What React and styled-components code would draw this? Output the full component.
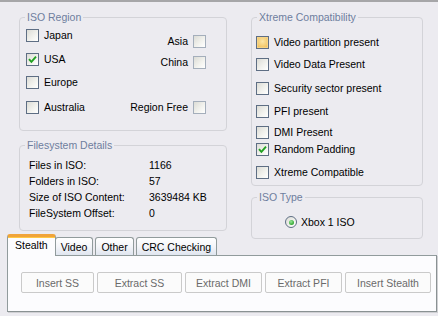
import React from "react";
import styled, { createGlobalStyle } from "styled-components";

const GlobalStyle = createGlobalStyle`
  body {
    margin: 0;
    background: #ecebf0;
    font-family: "Liberation Sans", Arial, sans-serif;
    font-size: 10.5px;
    color: #000;
  }
`;

const Window = styled.div`
  width: 438px;
  height: 316px;
  box-sizing: border-box;
  border-top: 2px solid #a6a6a8;
  overflow: hidden;
`;

const Main = styled.div`
  display: flex;
  align-items: flex-start;
  gap: 24px;
  height: 232px;
  box-sizing: border-box;
  padding: 9px 0 0 19px;
`;

const Column = styled.div`
  display: flex;
  flex-direction: column;
  width: ${(p) => p.$w}px;
`;

const Group = styled.fieldset`
  flex: none;
  box-sizing: border-box;
  margin: ${(p) => p.$mt || 0}px 0 0 0;
  padding: 0 ${(p) => p.$pr || 6}px 0 ${(p) => p.$pl || 6}px;
  height: ${(p) => p.$h}px;
  border: 1px solid #d3d3d8;
  border-radius: 4px;
  min-width: 0;
`;

const Title = styled.legend`
  padding: 0 2px;
  margin-left: ${(p) => p.$ml || 0}px;
  line-height: 13px;
  color: #6e7e9e;
`;

const Split = styled.div`
  display: flex;
  justify-content: space-between;
`;

const Stack = styled.div`
  display: flex;
  flex-direction: column;
  align-items: ${(p) => (p.$right ? "flex-end" : "flex-start")};
`;

const Row = styled.div`
  display: flex;
  align-items: center;
  gap: ${(p) => p.$gap || 5}px;
  height: 16px;
  margin-top: ${(p) => p.$mt || 0}px;
  padding-left: ${(p) => p.$pl || 0}px;
  white-space: nowrap;
`;

const Box = styled.span`
  position: relative;
  box-sizing: border-box;
  width: 13px;
  height: 13px;
  flex: none;
  border: 1px solid ${(p) => (p.$dim ? "#a4aebb" : "#5e6e84")};
  background: ${(p) =>
    p.$hover
      ? "radial-gradient(circle at 50% 40%, #fbe6a8 0%, #f3c768 70%, #e9b54c 100%)"
      : "linear-gradient(135deg, #dcdcd6 0%, #f3f3ef 60%, #ffffff 100%)"};
  box-shadow: ${(p) => (p.$hover ? "inset 0 0 0 1px #f7d487" : "none")};

  svg {
    position: absolute;
    left: 1px;
    top: 1px;
  }
`;

const Tick = () => (
  <svg width="9" height="9" viewBox="0 0 9 9">
    <path d="M1 4.2 L3.4 6.8 L8 1.6" fill="none" stroke="#21a121" strokeWidth="1.9" />
  </svg>
);

const Check = ({ label, checked, dim, hover, right, mt }) => (
  <Row $mt={mt}>
    {right && <span>{label}</span>}
    <Box $dim={dim} $hover={hover}>{checked && <Tick />}</Box>
    {!right && <span>{label}</span>}
  </Row>
);

const Detail = styled.div`
  display: grid;
  grid-template-columns: 120px 1fr;
  height: 16px;
  align-items: center;
  margin-top: ${(p) => p.$mt || 0}px;
`;

const Radio = styled.span`
  position: relative;
  box-sizing: border-box;
  width: 12px;
  height: 12px;
  border-radius: 50%;
  border: 1px solid #5e6e84;
  background: linear-gradient(135deg, #dcdcd6 0%, #f6f6f3 70%, #fff 100%);

  &::after {
    content: "";
    position: absolute;
    left: 2.5px;
    top: 2.5px;
    width: 5px;
    height: 5px;
    border-radius: 50%;
    background: radial-gradient(circle at 40% 35%, #9be59b 0%, #3fb13f 60%, #238a23 100%);
  }
`;

const TabArea = styled.div`
  padding-left: 7px;
`;

const TabStrip = styled.div`
  display: flex;
  align-items: flex-end;
  gap: 2px;
  height: 21px;
`;

const Tab = styled.div`
  position: relative;
  box-sizing: border-box;
  display: flex;
  align-items: center;
  white-space: nowrap;
  border: 1px solid #919b9c;
  border-bottom: none;
  border-radius: 3px 3px 0 0;
  ${(p) =>
    p.$active
      ? `
    z-index: 1;
    height: 22px;
    margin-bottom: -1px;
    margin-right: -3px;
    padding: 0 7px 3px 7px;
    background: #fcfcfe;
    border-top: 3px solid #f0a43a;
    box-shadow: inset 0 1px 0 #ffc844;
  `
      : `
    height: 18px;
    padding: 1px 5px 0 5px;
    background: linear-gradient(#ffffff 0%, #f4f5f9 50%, #dfe5ef 100%);
  `}
`;

const Panel = styled.div`
  box-sizing: border-box;
  width: 430px;
  height: 57px;
  border: 1px solid #919b9c;
  border-right-color: #8a9293;
  border-bottom-color: #8a9293;
  box-shadow: 1px 1px 0 #d0d0d4;
  background: #fcfcfe;
  display: flex;
  gap: 3px;
  padding: 16px 0 0 13px;
`;

const Button = styled.button`
  box-sizing: border-box;
  width: ${(p) => p.$w}px;
  height: 21px;
  padding: 0;
  border: 1px solid #cacaca;
  border-radius: 2px;
  background: #fbfbfb;
  color: #6a6a6a;
  font-family: inherit;
  font-size: 10.5px;
`;

export default function App() {
  return (
    <Window>
      <GlobalStyle />
      <Main>
        <Column $w={208}>
          <Group $h={120} $pr={20}>
            <Title $ml={-1}>ISO Region</Title>
            <Split>
              <Stack>
                <Check label="Japan" mt={3} />
                <Check label="USA" checked mt={8} />
                <Check label="Europe" mt={7} />
                <Check label="Australia" mt={9} />
              </Stack>
              <Stack $right>
                <Check label="Asia" right dim mt={9} />
                <Check label="China" right dim mt={5} />
                <Check label="Region Free" right dim mt={29} />
              </Stack>
            </Split>
          </Group>
          <Group $h={92} $mt={8} $pl={9}>
            <Title $ml={-4}>Filesystem Details</Title>
            <Detail $mt={5}>
              <span>Files in ISO:</span>
              <span>1166</span>
            </Detail>
            <Detail>
              <span>Folders in ISO:</span>
              <span>57</span>
            </Detail>
            <Detail>
              <span>Size of ISO Content:</span>
              <span>3639484 KB</span>
            </Detail>
            <Detail>
              <span>FileSystem Offset:</span>
              <span>0</span>
            </Detail>
          </Group>
        </Column>
        <Column $w={172}>
          <Group $h={175} $pl={4}>
            <Title $ml={1}>Xtreme Compatibility</Title>
            <Check label="Video partition present" hover mt={10} />
            <Check label="Video Data Present" mt={6} />
            <Check label="Security sector present" mt={8} />
            <Check label="PFI present" mt={7} />
            <Check label="DMI Present" mt={5} />
            <Check label="Random Padding" checked mt={1} />
            <Check label="Xtreme Compatible" mt={7} />
          </Group>
          <Group $h={48} $mt={5} $pl={4}>
            <Title $ml={1}>ISO Type</Title>
            <Row $mt={10} $pl={29} $gap={4}>
              <Radio />
              <span>Xbox 1 ISO</span>
            </Row>
          </Group>
        </Column>
      </Main>
      <TabArea>
        <TabStrip>
          <Tab $active>Stealth</Tab>
          <Tab>Video</Tab>
          <Tab>Other</Tab>
          <Tab>CRC Checking</Tab>
        </TabStrip>
        <Panel>
          <Button $w={73}>Insert SS</Button>
          <Button $w={85}>Extract SS</Button>
          <Button $w={77}>Extract DMI</Button>
          <Button $w={77}>Extract PFI</Button>
          <Button $w={86}>Insert Stealth</Button>
        </Panel>
      </TabArea>
    </Window>
  );
}
